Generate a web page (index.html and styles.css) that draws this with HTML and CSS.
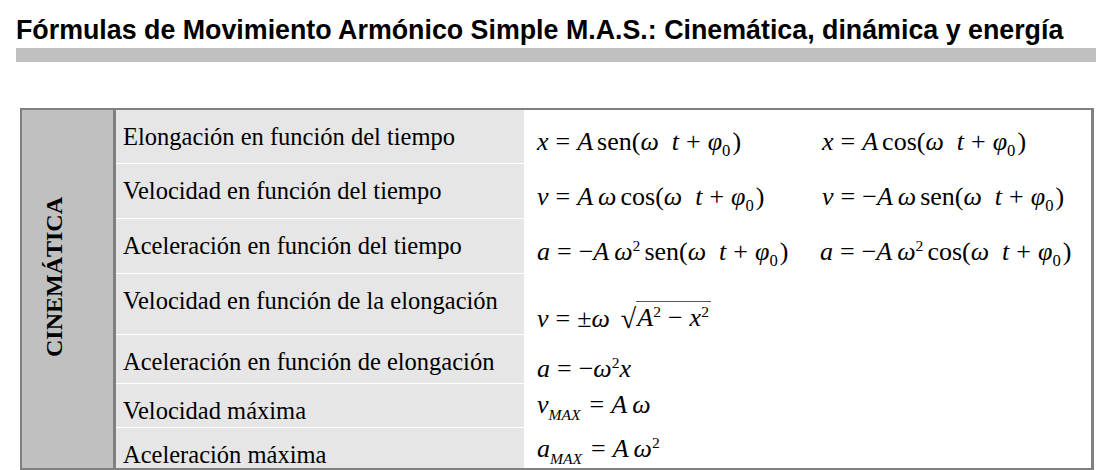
FILE: index.html
```html
<!DOCTYPE html>
<html lang="es">
<head>
<meta charset="utf-8">
<title>Fórmulas de M.A.S.</title>
<link rel="stylesheet" href="styles.css">
</head>
<body>
<div class="page">
  <h1 class="title">Fórmulas de Movimiento Armónico Simple M.A.S.: Cinemática, dinámica y energía</h1>
  <div class="title-bar"></div>

  <div class="sheet">
    <div class="side"><span class="side-label">CINEMÁTICA</span></div>

    <div class="label">Elongación en función del tiempo</div>
    <div class="formula f1">
      <span class="eq first"><i>x</i><span class="op">=</span><i>A</i><span class="fn">sen</span>(<i>ω</i><i class="t">t</i><span class="op">+</span><i>φ</i><span class="sub">0</span>)</span>
      <span class="eq"><i>x</i><span class="op">=</span><i>A</i><span class="fn">cos</span>(<i>ω</i><i class="t">t</i><span class="op">+</span><i>φ</i><span class="sub">0</span>)</span>
    </div>

    <div class="label">Velocidad en función del tiempo</div>
    <div class="formula f2">
      <span class="eq first"><i>v</i><span class="op">=</span><i>A</i><i class="w">ω</i><span class="fn">cos</span>(<i>ω</i><i class="t">t</i><span class="op">+</span><i>φ</i><span class="sub">0</span>)</span>
      <span class="eq"><i>v</i><span class="op">=</span>−<i>A</i><i class="w">ω</i><span class="fn">sen</span>(<i>ω</i><i class="t">t</i><span class="op">+</span><i>φ</i><span class="sub">0</span>)</span>
    </div>

    <div class="label">Aceleración en función del tiempo</div>
    <div class="formula f3">
      <span class="eq first"><i>a</i><span class="op">=</span>−<i>A</i><i class="w">ω</i><span class="sup">2</span><span class="fn">sen</span>(<i>ω</i><i class="t">t</i><span class="op">+</span><i>φ</i><span class="sub">0</span>)</span>
      <span class="eq shift"><i>a</i><span class="op">=</span>−<i>A</i><i class="w">ω</i><span class="sup">2</span><span class="fn">cos</span>(<i>ω</i><i class="t">t</i><span class="op">+</span><i>φ</i><span class="sub">0</span>)</span>
    </div>

    <div class="label">Velocidad en función de la elongación</div>
    <div class="formula f4">
      <span class="eq first"><i>v</i><span class="op">=</span>±<i>ω</i><span class="sqrt"><span class="rad">√</span><span class="radicand"><i>A</i><span class="sup">2</span><span class="op">−</span><i>x</i><span class="sup">2</span></span></span></span>
    </div>

    <div class="label">Aceleración en función de elongación</div>
    <div class="formula f5">
      <span class="eq first"><i>a</i><span class="op">=</span>−<i>ω</i><span class="sup">2</span><i>x</i></span>
    </div>

    <div class="label">Velocidad máxima</div>
    <div class="formula f6">
      <span class="eq first"><i>v</i><span class="sub it">MAX</span><span class="op">=</span><i>A</i><i class="w">ω</i></span>
    </div>

    <div class="label last">Aceleración máxima</div>
    <div class="formula f7 last">
      <span class="eq first"><i>a</i><span class="sub it">MAX</span><span class="op">=</span><i>A</i><i class="w">ω</i><span class="sup">2</span></span>
    </div>
  </div>
</div>
</body>
</html>
```

FILE: styles.css
```css
html, body {
  margin: 0;
  padding: 0;
  background: #ffffff;
  overflow: hidden;
}

.page {
  padding-left: 16px;
  color: #000;
}

.title {
  margin: 15px 0 0 0;
  font-family: "Liberation Sans", Arial, sans-serif;
  font-weight: bold;
  font-size: 26.8px;
  line-height: 30px;
  white-space: nowrap;
}

.title-bar {
  margin-top: 3px;
  width: 1080px;
  height: 14px;
  background: #c0c0c0;
}

.sheet {
  margin-top: 46px;
  margin-left: 4px;
  width: 1074px;
  box-sizing: border-box;
  border-style: solid;
  border-color: #808080;
  border-width: 2px 3px 3px 2px;
  display: grid;
  grid-template-columns: 94px 408px 1fr;
  grid-template-rows: 54px 55px 55px 61px 49px 44px 40px;
  font-family: "Liberation Serif", "Times New Roman", serif;
}

.side {
  grid-column: 1;
  grid-row: 1 / -1;
  background: #c0c0c0;
  border-right: 3px solid #808080;
  display: flex;
  align-items: flex-start;
  padding: 87px 0 0 20px;
}

.side-label {
  writing-mode: vertical-rl;
  transform: rotate(180deg);
  font-weight: bold;
  font-size: 24px;
  line-height: 24px;
  white-space: nowrap;
}

.label {
  grid-column: 2;
  background: #e6e6e6;
  border-bottom: 1px solid #ffffff;
  padding: 15px 0 0 7px;
  font-size: 24.5px;
  line-height: 24px;
  white-space: nowrap;
}

.label.last {
  border-bottom: none;
}

.formula {
  grid-column: 3;
  display: flex;
  padding-left: 13px;
  font-size: 26px;
  line-height: 26px;
  white-space: nowrap;
}

.formula i {
  font-style: italic;
}

.eq.first {
  flex: 0 0 285px;
}

.eq.shift {
  margin-left: -2px;
}

.op {
  margin: 0 7px;
}

.fn {
  margin-left: 4px;
}

.t {
  margin-left: 13px;
}

.w {
  margin-left: 5px;
}

.f1 { padding-top: 19px; }
.f2 { padding-top: 20px; }
.f3 { padding-top: 20px; }
.f4 { padding-top: 27px; }
.f5 { padding-top: 21px; }
.f6 { padding-top: 8px; }
.f7 { padding-top: 8px; }

.sub {
  font-size: 0.64em;
  vertical-align: -0.34em;
  line-height: 0;
  margin-right: 2px;
}

.sub.it {
  font-style: italic;
  font-size: 0.6em;
  vertical-align: -0.45em;
  margin-right: 2px;
}

.sup {
  font-size: 0.6em;
  vertical-align: 0.6em;
  line-height: 0;
}

.sqrt {
  display: inline-flex;
  align-items: flex-end;
  margin-left: 11px;
  line-height: 26px;
}

.rad {
  display: inline-block;
  font-size: 28px;
  line-height: 26px;
  transform: translateY(1px);
}

.radicand {
  display: inline-block;
  border-top: 1px solid #555;
  padding: 3px 2px 0 1px;
  line-height: 26px;
}
```
